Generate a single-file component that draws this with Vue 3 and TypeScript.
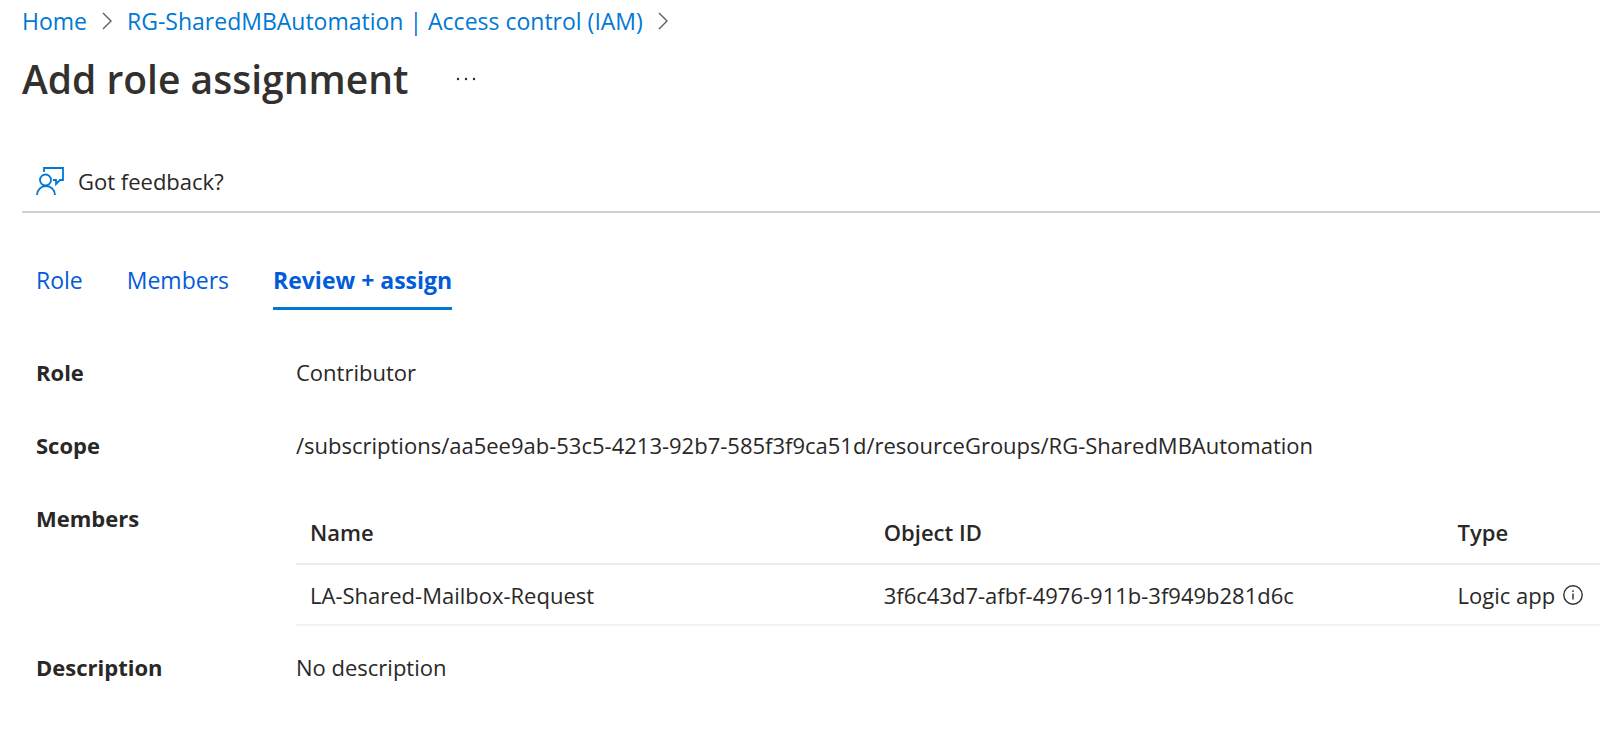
<script setup lang="ts">
interface Member { name: string; objectId: string; type: string }
const members: Member[] = [
  { name: 'LA-Shared-Mailbox-Request', objectId: '3f6c43d7-afbf-4976-911b-3f949b281d6c', type: 'Logic app' },
]
const tabs = ['Role', 'Members', 'Review + assign']
const active = 'Review + assign'
</script>

<template>
  <main class="page">
    <nav class="crumbs" aria-label="Breadcrumb">
      <a href="#">Home</a>
      <svg class="chev" viewBox="0 0 10 18"><path d="M1 1l8 8-8 8" /></svg>
      <a href="#">RG-SharedMBAutomation | Access control (IAM)</a>
      <svg class="chev" viewBox="0 0 10 18"><path d="M1 1l8 8-8 8" /></svg>
    </nav>
    <header class="head">
      <h1>Add role assignment</h1>
      <button class="more" type="button" aria-label="More"><svg viewBox="0 0 20 4"><circle cx="2" cy="2" r="1.2" /><circle cx="10" cy="2" r="1.2" /><circle cx="18" cy="2" r="1.2" /></svg></button>
    </header>
    <div class="toolbar">
      <button class="feedback" type="button">
        <svg viewBox="0 0 28 28"><path d="M8 5V1h19v12h-3l-4 4v-4h-3" /><circle cx="9.5" cy="13" r="5.5" /><path d="M1 28a9 9 0 0 1 18 0" /></svg>
        <span>Got feedback?</span>
      </button>
    </div>
    <div class="tabs" role="tablist">
      <button v-for="t in tabs" :key="t" type="button" role="tab" :aria-selected="t === active" :class="['tab', { active: t === active }]">{{ t }}</button>
    </div>
    <dl class="details">
      <dt>Role</dt>
      <dd>Contributor</dd>
      <dt>Scope</dt>
      <dd>/subscriptions/aa5ee9ab-53c5-4213-92b7-585f3f9ca51d/resourceGroups/RG-SharedMBAutomation</dd>
      <dt>Members</dt>
      <dd class="members">
        <table>
          <thead><tr><th class="main">Name</th><th class="main">Object ID</th><th>Type</th></tr></thead>
          <tbody>
            <tr v-for="m in members" :key="m.objectId">
              <td>{{ m.name }}</td>
              <td>{{ m.objectId }}</td>
              <td><span class="type">{{ m.type }}<svg class="info" viewBox="0 0 20 20"><circle cx="10" cy="10" r="9.2" /><path d="M10 8.5V14.5M10 5.2v1.8" /></svg></span></td>
            </tr>
          </tbody>
        </table>
      </dd>
      <dt>Description</dt>
      <dd>No description</dd>
    </dl>
  </main>
</template>

<style>
body { margin: 0; background: #fff; }
</style>
<style scoped>
.page { padding: 6px 0 0 22px; font-family: "Open Sans", "Noto Sans", sans-serif; font-size: 22px; line-height: 30px; color: #292827; }
button { font: inherit; color: inherit; background: none; border: 0; padding: 0; cursor: pointer; }
.crumbs { display: flex; align-items: center; gap: 15px; font-size: 23px; }
.crumbs a { color: #0078d4; text-decoration: none; white-space: nowrap; }
svg { display: block; flex: none; fill: none; }
.chev { width: 10px; height: 18px; stroke: #605e5c; stroke-width: 1.4; }
.head { display: flex; align-items: center; gap: 48px; padding-top: 16px; }
h1 { margin: 0; font-size: 39px; line-height: 54px; font-weight: 600; color: #323130; }
.more svg { width: 20px; height: 4px; fill: #292827; }
.toolbar { margin-top: 52px; padding: 8px 14px 15px; border-bottom: 2px solid #d2d0ce; }
.feedback { display: flex; align-items: center; gap: 14px; }
.feedback svg { width: 28px; height: 28px; stroke: #0078d4; stroke-width: 1.8; }
.tabs { display: flex; gap: 44px; padding: 52px 14px 0; font-size: 23px; color: #015cda; }
.tab { padding-bottom: 12px; border-bottom: 3px solid transparent; }
.active { font-weight: 700; border-color: #0078d4; }
.details { display: grid; grid-template-columns: 260px 1fr; row-gap: 43px; margin: 47px 0 0; padding-left: 14px; }
dt { font-weight: 700; }
dd { margin: 0; }
.members { margin-bottom: -17px; }
table { width: 100%; border-collapse: separate; border-spacing: 0; table-layout: fixed; }
th, td { box-sizing: border-box; text-align: left; white-space: nowrap; }
th { padding: 14px 14px 16px; border-bottom: 2px solid #edebe9; font-weight: 600; }
td { padding: 15px 14px 14px; border-bottom: 2px solid #f3f2f1; }
.main { width: 44%; }
.type { display: flex; align-items: center; gap: 8px; }
.info { width: 20px; height: 20px; stroke: #323130; stroke-width: 1.4; }
</style>
